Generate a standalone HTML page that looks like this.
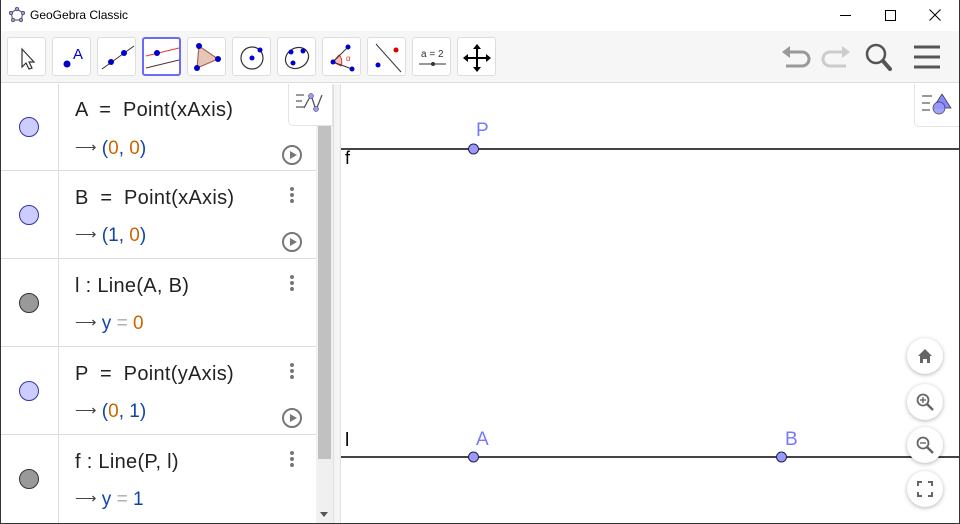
<!DOCTYPE html><html><head><style>
*{margin:0;padding:0;box-sizing:border-box}
body{width:960px;height:524px;overflow:hidden;background:#fff;font-family:"Liberation Sans",sans-serif;position:relative}
.a{position:absolute}
.btn{position:absolute;top:37px;width:39px;height:39px;background:#fff;border:1px solid #ddd;border-radius:3px}
.btn svg{position:absolute;left:0;top:0}
.row{position:absolute;left:0;width:316px;height:88px;border-bottom:1px solid #ddd}
.mk{position:absolute;left:19px;width:20px;height:20px;border-radius:50%;border:1px solid #333}
.eq{position:absolute;left:75px;font-size:20px;color:#222;letter-spacing:.3px}
.out{position:absolute;left:75px;font-size:19px;color:#333}
.ar{font-size:15px;color:#444;position:relative;top:-2px}
.dots{position:absolute;left:290px;width:4px}
.dots i{display:block;width:4px;height:4px;border-radius:50%;background:#777;margin-bottom:2px}
.play{position:absolute;left:282px;width:20px;height:20px;border:2px solid #777;border-radius:50%}
.play:after{content:"";position:absolute;left:6px;top:4px;border-left:7px solid #777;border-top:4px solid transparent;border-bottom:4px solid transparent}
.zb{position:absolute;left:907px;width:36px;height:36px;border-radius:50%;background:#fff;box-shadow:0 1px 4px rgba(0,0,0,.3)}
.o{color:#c60}.b{color:#14a}.g{color:#aaa}
</style></head><body>
<div class="a" style="left:0;top:0;width:960px;height:524px;border:1px solid #333;border-top:none;z-index:9;pointer-events:none"></div>
<svg class="a" style="left:9px;top:7px" width="16" height="16"><polygon points="8,2 14,6 12,13 4,13 2,6" fill="none" stroke="#666" stroke-width="1.2"/><g fill="#99f" stroke="#333" stroke-width=".6"><circle cx="8" cy="2" r="1.8"/><circle cx="14" cy="6" r="1.8"/><circle cx="12" cy="13" r="1.8"/><circle cx="4" cy="13" r="1.8"/><circle cx="2" cy="6" r="1.8"/></g></svg>
<div class="a" style="left:30px;top:8px;font-size:12px;color:#000">GeoGebra Classic</div>
<div class="a" style="left:840px;top:15px;width:11px;height:1px;background:#000"></div>
<div class="a" style="left:885px;top:10px;width:11px;height:11px;border:1px solid #000"></div>
<svg class="a" style="left:929px;top:9px" width="12" height="12"><path d="M0.5 0.5 L11.5 11.5 M11.5 0.5 L0.5 11.5" stroke="#000" stroke-width="1"/></svg>
<div class="a" style="left:0;top:31px;width:960px;height:52px;background:#f6f6f6;border-bottom:1px solid #ddd"></div>
<div class="btn" style="left:7px"><svg width="39" height="39"><path d="M14 11 L14 29 L18 25 L21 31 L24 30 L21 24 L26 24 Z" fill="#fff" stroke="#333" stroke-width="1.2"/></svg></div>
<div class="btn" style="left:52px"><svg width="39" height="39"><circle cx="14" cy="26" r="3.5" fill="#00c"/><text x="20" y="21" font-size="15" fill="#00c" font-family="Liberation Sans">A</text></svg></div>
<div class="btn" style="left:97px"><svg width="39" height="39"><line x1="4" y1="31" x2="36" y2="8" stroke="#333"/><circle cx="13" cy="24" r="3" fill="#00c"/><circle cx="26" cy="15" r="3" fill="#00c"/></svg></div>
<div class="btn" style="left:142px;border:2px solid #6b6bf5"><svg width="39" height="39"><line x1="2" y1="17" x2="35" y2="9" stroke="#e33"/><line x1="2" y1="29" x2="35" y2="21" stroke="#533"/><circle cx="13" cy="14" r="3" fill="#00c"/></svg></div>
<div class="btn" style="left:187px"><svg width="39" height="39"><polygon points="11,8 30,21 9,30" fill="#e6c6b6" stroke="#a65" stroke-width="1.2"/><g fill="#00c"><circle cx="11" cy="8" r="3"/><circle cx="30" cy="21" r="3"/><circle cx="9" cy="30" r="3"/></g></svg></div>
<div class="btn" style="left:232px"><svg width="39" height="39"><circle cx="19" cy="20" r="11" fill="none" stroke="#333" stroke-width="1.2"/><circle cx="19" cy="20" r="2.5" fill="#00c"/><circle cx="27" cy="12" r="2.5" fill="#00c"/></svg></div>
<div class="btn" style="left:277px"><svg width="39" height="39"><ellipse cx="19" cy="20" rx="12" ry="10" fill="none" stroke="#333" stroke-width="1.2" transform="rotate(-30 19 20)"/><g fill="#00c"><circle cx="13" cy="14" r="2.5"/><circle cx="25" cy="13" r="2.5"/><circle cx="15" cy="25" r="2.5"/></g></svg></div>
<div class="btn" style="left:322px"><svg width="39" height="39"><path d="M10 24 L18 28 A10 10 0 0 0 16 17 Z" fill="#f8c0c0" stroke="#e33"/><line x1="10" y1="24" x2="25" y2="9" stroke="#333"/><line x1="10" y1="24" x2="29" y2="31" stroke="#333"/><g fill="#00c"><circle cx="10" cy="24" r="2.5"/><circle cx="25" cy="9" r="2.5"/><circle cx="29" cy="31" r="2.5"/></g><text x="23" y="23" font-size="8" fill="#e33">α</text></svg></div>
<div class="btn" style="left:367px"><svg width="39" height="39"><line x1="8" y1="6" x2="33" y2="34" stroke="#333"/><circle cx="28" cy="12" r="2.5" fill="#d00"/><circle cx="10" cy="27" r="2.5" fill="#00c"/></svg></div>
<div class="btn" style="left:412px"><svg width="39" height="39"><text x="8" y="19" font-size="10" fill="#333" font-family="Liberation Sans">a = 2</text><line x1="6" y1="26" x2="33" y2="26" stroke="#333"/><circle cx="20" cy="26" r="2" fill="#333"/></svg></div>
<div class="btn" style="left:457px"><svg width="39" height="39"><g stroke="#000" stroke-width="2"><line x1="19" y1="10" x2="19" y2="30"/><line x1="9" y1="20" x2="29" y2="20"/></g><g fill="#000"><polygon points="19,6 15,11 23,11"/><polygon points="19,34 15,29 23,29"/><polygon points="5,20 10,16 10,24"/><polygon points="33,20 28,16 28,24"/></g></svg></div>
<svg class="a" style="left:780px;top:42px" width="160" height="32"><path d="M6 10 H22 A7 7 0 0 1 22 24 H6" fill="none" stroke="#999" stroke-width="3"/><polygon points="2,10 10,4 10,16" fill="#999"/><path d="M66 10 H50 A7 7 0 0 0 50 24 H66" fill="none" stroke="#ccc" stroke-width="3"/><polygon points="70,10 62,4 62,16" fill="#ccc"/><circle cx="96" cy="12" r="9" fill="none" stroke="#555" stroke-width="2.5"/><line x1="103" y1="19" x2="110" y2="27" stroke="#555" stroke-width="4" stroke-linecap="round"/><g stroke="#555" stroke-width="3"><line x1="134" y1="5" x2="160" y2="5"/><line x1="134" y1="15" x2="160" y2="15"/><line x1="134" y1="25" x2="160" y2="25"/></g></svg>
<div class="a" style="left:58px;top:84px;width:1px;height:440px;background:#ddd"></div>
<div class="row" style="top:84px;height:87px"><div class="mk" style="top:33px;background:#ccf;border-color:#33a"></div><div class="eq" style="top:15px">A &nbsp;= &nbsp;Point(xAxis)</div><div class="out" style="top:54px"><span class="ar">⟶</span> <span class="b">(<span class="o">0</span>, <span class="o">0</span>)</span></div><div class="play" style="top:61px"></div></div>
<div class="row" style="top:171px"><div class="mk" style="top:34px;background:#ccf;border-color:#33a"></div><div class="eq" style="top:16px">B &nbsp;= &nbsp;Point(xAxis)</div><div class="out" style="top:54px"><span class="ar">⟶</span> <span class="b">(1, <span class="o">0</span>)</span></div><div class="dots" style="top:16px"><i></i><i></i><i></i></div><div class="play" style="top:61px"></div></div>
<div class="row" style="top:259px"><div class="mk" style="top:34px;background:#999"></div><div class="eq" style="top:16px">l : Line(A, B)</div><div class="out" style="top:54px"><span class="ar">⟶</span> <span class="b">y</span> <span class="g">=</span> <span class="o">0</span></div><div class="dots" style="top:16px"><i></i><i></i><i></i></div></div>
<div class="row" style="top:347px"><div class="mk" style="top:34px;background:#ccf;border-color:#33a"></div><div class="eq" style="top:16px">P &nbsp;= &nbsp;Point(yAxis)</div><div class="out" style="top:54px"><span class="ar">⟶</span> <span class="b">(<span class="o">0</span>, 1)</span></div><div class="dots" style="top:16px"><i></i><i></i><i></i></div><div class="play" style="top:61px"></div></div>
<div class="row" style="top:435px;border:none"><div class="mk" style="top:34px;background:#999"></div><div class="eq" style="top:16px">f : Line(P, l)</div><div class="out" style="top:54px"><span class="ar">⟶</span> <span class="b">y</span> <span class="g">=</span> <span class="b">1</span></div><div class="dots" style="top:16px"><i></i><i></i><i></i></div></div>
<div class="a" style="left:316px;top:84px;width:17px;height:440px;background:#f0f0f0"></div>
<div class="a" style="left:318px;top:125px;width:13px;height:334px;background:#c1c1c1"></div>
<div class="a" style="left:320px;top:512px;border-top:5px solid #555;border-left:4px solid transparent;border-right:4px solid transparent"></div>
<div class="a" style="left:333px;top:84px;width:8px;height:440px;background:#f4f4f4;border-left:1px solid #e0e0e0;border-right:1px solid #e0e0e0"></div>
<div class="a" style="left:288px;top:84px;width:45px;height:42px;background:#fff;border:1px solid #e4e4e4;border-top:none;border-radius:0 0 0 5px"></div>
<svg class="a" style="left:294px;top:90px" width="36" height="30"><g stroke="#999" stroke-width="2"><line x1="2" y1="5" x2="10" y2="5"/><line x1="2" y1="11" x2="8" y2="11"/><line x1="2" y1="17" x2="10" y2="17"/></g><path d="M10 18 L17 5 L22 20 L28 5" fill="none" stroke="#555" stroke-width="1.3"/><circle cx="17" cy="6" r="2.5" fill="#99f" stroke="#333" stroke-width=".5"/><circle cx="22" cy="19" r="2.5" fill="#99f" stroke="#333" stroke-width=".5"/></svg>
<div class="a" style="left:341px;top:148px;width:619px;height:2px;background:#444"></div>
<div class="a" style="left:341px;top:456px;width:619px;height:2px;background:#444"></div>
<div class="a" style="left:345px;top:148px;font-size:18px;color:#000">f</div>
<div class="a" style="left:345px;top:430px;font-size:19px;color:#000">l</div>
<div class="a" style="left:476px;top:120px;font-size:19px;color:#77f">P</div>
<div class="a" style="left:476px;top:429px;font-size:19px;color:#77f">A</div>
<div class="a" style="left:785px;top:429px;font-size:19px;color:#77f">B</div>
<svg class="a" style="left:460px;top:140px" width="340" height="330"><g fill="#99f" stroke="#224" stroke-width="1"><circle cx="13.5" cy="9" r="5"/><circle cx="13.5" cy="317" r="5"/><circle cx="321.5" cy="317" r="5"/></g></svg>
<div class="a" style="left:914px;top:84px;width:46px;height:43px;background:#fff;border:1px solid #e4e4e4;border-top:none;border-right:none;border-radius:0 0 0 5px"></div>
<svg class="a" style="left:920px;top:90px" width="34" height="30"><g stroke="#999" stroke-width="2"><line x1="2" y1="6" x2="12" y2="6"/><line x1="2" y1="13" x2="10" y2="13"/><line x1="2" y1="20" x2="10" y2="20"/></g><polygon points="22,4 31,18 13,18" fill="#88f" stroke="#333" stroke-width=".7"/><circle cx="19" cy="18" r="6" fill="#99f" stroke="#333" stroke-width=".7" opacity=".9"/></svg>
<div class="zb" style="top:338px"><svg width="36" height="36"><path d="M11 18 L18 11 L25 18 H23 V25 H20 V21 H16 V25 H13 V18 Z" fill="#666"/></svg></div>
<div class="zb" style="top:384px"><svg width="36" height="36"><circle cx="16" cy="16" r="5.5" fill="none" stroke="#666" stroke-width="1.8"/><line x1="20" y1="20" x2="26" y2="26" stroke="#666" stroke-width="2.5"/><line x1="13" y1="16" x2="19" y2="16" stroke="#666" stroke-width="1.4"/><line x1="16" y1="13" x2="16" y2="19" stroke="#666" stroke-width="1.4"/></svg></div>
<div class="zb" style="top:427px"><svg width="36" height="36"><circle cx="16" cy="16" r="5.5" fill="none" stroke="#666" stroke-width="1.8"/><line x1="20" y1="20" x2="26" y2="26" stroke="#666" stroke-width="2.5"/><line x1="13" y1="16" x2="19" y2="16" stroke="#666" stroke-width="1.4"/></svg></div>
<div class="zb" style="top:471px"><svg width="36" height="36"><path d="M11 15 V11 H15 M21 11 H25 V15 M25 21 V25 H21 M15 25 H11 V21" fill="none" stroke="#666" stroke-width="2"/></svg></div>
</body></html>
